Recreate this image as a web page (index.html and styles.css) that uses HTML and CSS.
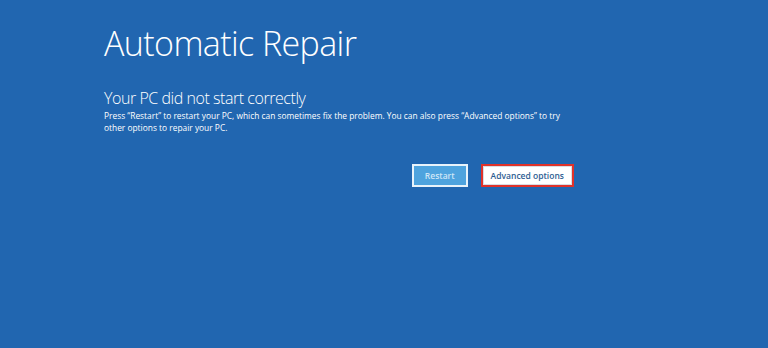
FILE: index.html
```html
<!doctype html>
<html lang="en">

<head>
  <meta charset="utf-8" />
  <meta name="viewport" content="width=device-width, initial-scale=1.0" />
  <link rel="stylesheet" href="styles.css">
</head>

<body>
  <main class="screen">
    <h1>Automatic Repair</h1>
    <h2>Your PC did not start correctly</h2>
    <p>Press “Restart” to restart your PC, which can sometimes fix the problem. You can also press “Advanced options” to try other options to repair your PC.</p>

    <div class="actions">
      <button class="btn btn-restart">Restart</button>
      <button class="btn btn-advanced">Advanced options</button>
    </div>
  </main>
</body>

</html>
```

FILE: styles.css
```css
:root {
  --bg: #2166b0;
  --text: #ffffff;
}

body {
  margin: 0;
  background: var(--bg);
  color: var(--text);
  font-family: 'Open Sans', 'Noto Sans', sans-serif;
  width: 768px;
  height: 348px;
  overflow: hidden;
}

.screen {
  padding: 18px 0 0 104px;
  width: 470px;
}

h1 {
  font-size: 34px;
  font-weight: 300;
  margin: 0;
  line-height: 50px;
  letter-spacing: -0.6px;
}

h2 {
  font-size: 16px;
  font-weight: 300;
  margin: 19px 0 0;
  line-height: 22px;
  letter-spacing: -0.45px;
}

p {
  font-size: 8.4px;
  line-height: 12px;
  margin: 1px 0 0;
}

.actions {
  display: flex;
  gap: 13px;
  margin: 30px 0 0 308px;
}

.btn {
  font-family: 'Open Sans', sans-serif;
  font-size: 8.5px;
  font-weight: 600;
  height: 23px;
  padding: 0;
  cursor: pointer;
}

.btn-restart {
  width: 57px;
  background: #4ea3de;
  color: #cfe6f7;
  border: 2px solid #e8f3fb;
}

.btn-advanced {
  width: 96px;
  background: #ffffff;
  color: #2e5e92;
  border: 2px solid #e0322a;
  box-shadow: inset 0 0 0 1px #d8dde3;
}
```
